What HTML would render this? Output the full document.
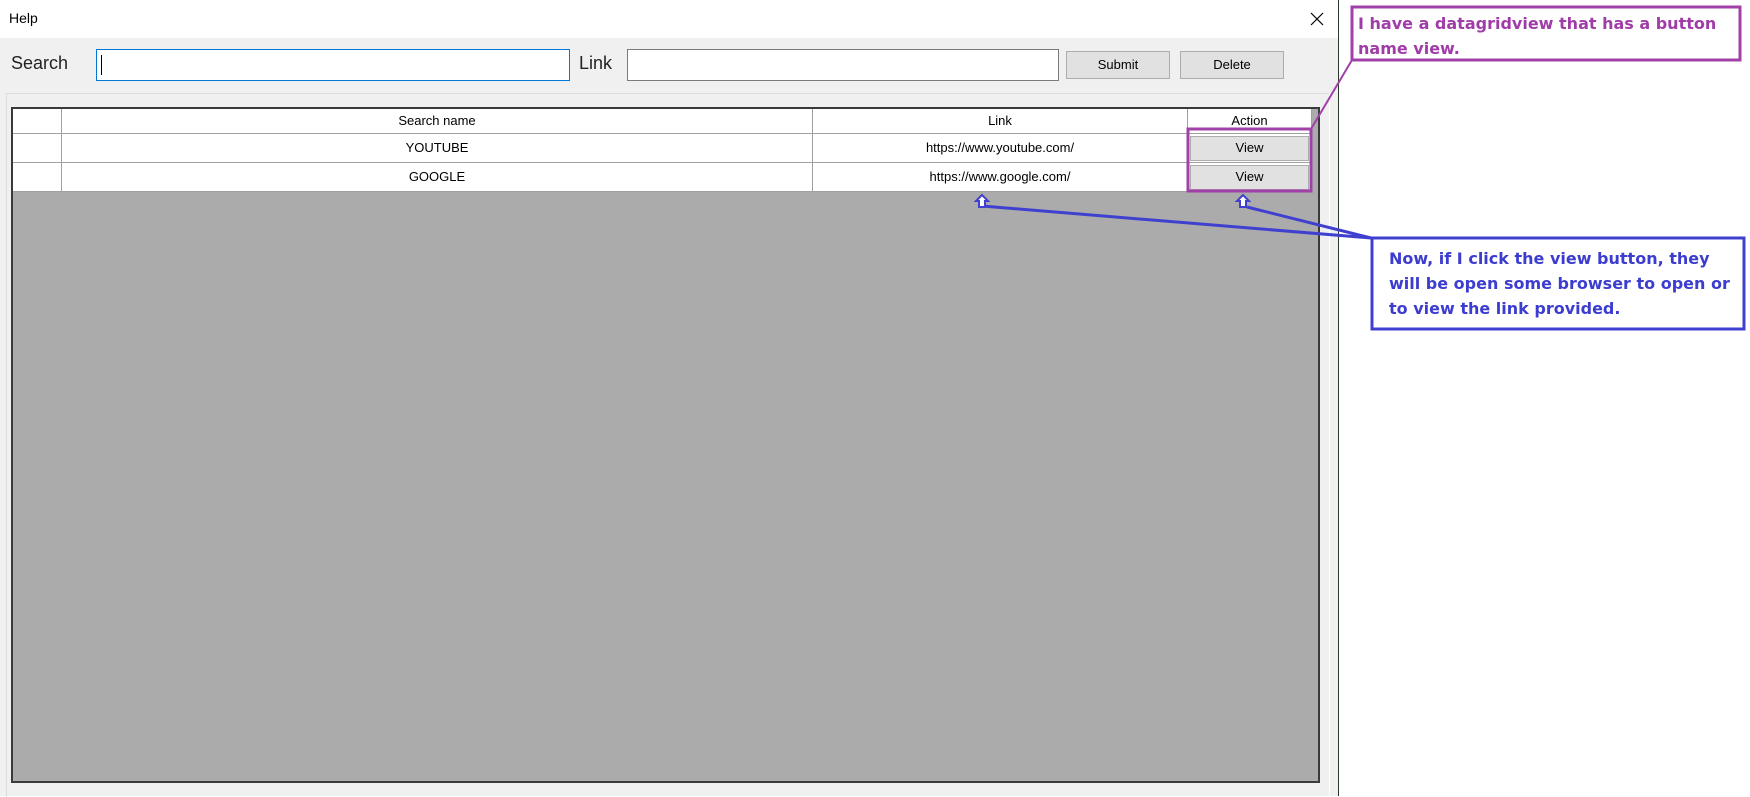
<!DOCTYPE html>
<html><head><style>
body{margin:0;width:1750px;height:796px;position:relative;background:#fff;font-family:"Liberation Sans",sans-serif;overflow:hidden}
.a{position:absolute}
.win{left:0;top:0;width:1338px;height:796px;background:#fff;border-right:1px solid #2a3a2a}
.client{left:0;top:38px;width:1338px;height:758px;background:#f0f0f0}
.lbl{font-size:18px;color:#222}
.inp{background:#fff;border:1px solid #7a7a7a;box-sizing:border-box}
.btn{background:#e1e1e1;border:1px solid #adadad;box-sizing:border-box;font-size:13px;text-align:center;line-height:25px;color:#000}
.cell{position:absolute;background:#fff;border-right:1px solid #a0a0a0;border-bottom:1px solid #a0a0a0;box-sizing:border-box;font-size:13px;text-align:center;color:#000}
.vb{position:absolute;background:#e1e1e1;border:1px solid #adadad;box-sizing:border-box;font-size:13px;text-align:center;line-height:22px}
.ann{font-family:"DejaVu Sans",sans-serif;font-weight:bold;font-size:16px;line-height:25px}
</style></head><body>
<div class="a win"></div>
<div class="a" style="left:9px;top:10px;font-size:14px;color:#000">Help</div>
<svg class="a" style="left:1310px;top:12px" width="14" height="14"><path d="M1 1L13 13M13 1L1 13" stroke="#000" stroke-width="1.2"/></svg>
<div class="a client"></div>
<div class="a lbl" style="left:11px;top:53px">Search</div>
<div class="a inp" style="left:96px;top:49px;width:474px;height:32px;border-color:#0078d7"></div>
<div class="a" style="left:101px;top:55px;width:1px;height:20px;background:#000"></div>
<div class="a lbl" style="left:579px;top:53px">Link</div>
<div class="a inp" style="left:627px;top:49px;width:432px;height:32px"></div>
<div class="a btn" style="left:1066px;top:51px;width:104px;height:28px">Submit</div>
<div class="a btn" style="left:1180px;top:51px;width:104px;height:28px">Delete</div>
<div class="a" style="left:6px;top:93px;width:1322px;height:703px;border-top:1px solid #dcdcdc;border-left:1px solid #dcdcdc;border-right:1px solid #fff"></div>
<div class="a" style="left:11px;top:107px;width:1309px;height:676px;background:#ababab;border:2px solid #3a3a3a;box-sizing:border-box"></div>
<div class="cell" style="left:13px;top:109px;width:49px;height:25px"></div>
<div class="cell" style="left:62px;top:109px;width:751px;height:25px;line-height:24px">Search name</div>
<div class="cell" style="left:813px;top:109px;width:375px;height:25px;line-height:24px">Link</div>
<div class="cell" style="left:1188px;top:109px;width:124px;height:25px;line-height:24px">Action</div>
<div class="cell" style="left:13px;top:134px;width:49px;height:29px"></div>
<div class="cell" style="left:62px;top:134px;width:751px;height:29px;line-height:28px">YOUTUBE</div>
<div class="cell" style="left:813px;top:134px;width:375px;height:29px;line-height:28px">https://www.youtube.com/</div>
<div class="cell" style="left:1188px;top:134px;width:124px;height:29px"></div>
<div class="vb" style="left:1190px;top:136px;width:119px;height:25px">View</div>
<div class="cell" style="left:13px;top:163px;width:49px;height:29px"></div>
<div class="cell" style="left:62px;top:163px;width:751px;height:29px;line-height:28px">GOOGLE</div>
<div class="cell" style="left:813px;top:163px;width:375px;height:29px;line-height:28px">https://www.google.com/</div>
<div class="cell" style="left:1188px;top:163px;width:124px;height:29px"></div>
<div class="vb" style="left:1190px;top:165px;width:119px;height:25px">View</div>
<svg class="a" style="left:0;top:0" width="1750" height="796">
<rect x="1188" y="129" width="123" height="62" fill="none" stroke="#a040a8" stroke-width="3"/>
<line x1="1311" y1="129" x2="1352" y2="60" stroke="#a040a8" stroke-width="2"/>
<rect x="1352" y="7" width="388" height="53" fill="none" stroke="#a040a8" stroke-width="3"/>
<rect x="1372" y="238" width="372" height="91" fill="none" stroke="#4040d0" stroke-width="3"/>
<path d="M1371 238L982 206M1371 238L1247 207" stroke="#4040d0" stroke-width="3" fill="none"/>
<path d="M982 195l-6 6h3v6h6v-6h3z" fill="#fff" stroke="#4040d0" stroke-width="2"/>
<path d="M1243 195l-6 6h3v6h6v-6h3z" fill="#fff" stroke="#4040d0" stroke-width="2"/>
</svg>
<div class="a ann" style="left:1358px;top:11px;color:#a03ca8">I have a datagridview that has a button<br>name view.</div>
<div class="a ann" style="left:1389px;top:246px;color:#3c3cd0">Now, if I click the view button, they<br>will be open some browser to open or<br>to view the link provided.</div>
</body></html>
